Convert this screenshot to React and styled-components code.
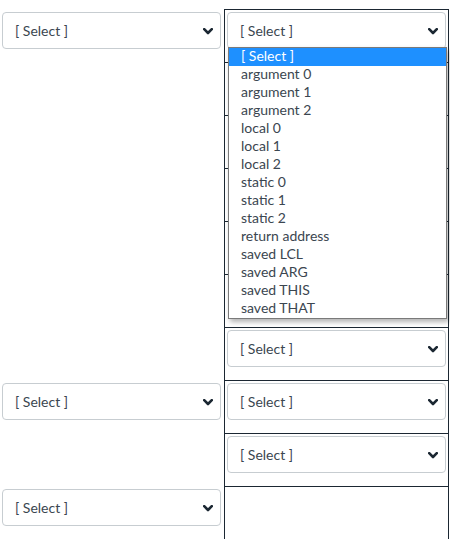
import React from 'react';
import styled, { createGlobalStyle } from 'styled-components';

const GlobalStyle = createGlobalStyle`
  body {
    margin: 0;
    background: #fff;
    font-family: Lato, "Open Sans", sans-serif;
    color: #2d3b45;
  }
`;

const Page = styled.div`
  padding-top: 9px;
  width: 450px;
`;

const Table = styled.div`
  display: flex;
  flex-direction: column;
`;

const Row = styled.div`
  display: flex;
  height: 53px;
  box-sizing: border-box;
`;

const LeftCell = styled.div`
  width: 224px;
  padding: 3px 0 0 2px;
  box-sizing: border-box;
`;

const RightCell = styled.div`
  position: relative;
  width: 225px;
  height: ${(p) => (p.$last ? '54px' : '53px')};
  padding: 2px;
  box-sizing: border-box;
  border: 1px solid #1b2732;
  border-bottom: ${(p) => (p.$last ? '1px solid #1b2732' : 'none')};
`;

const SelectBox = styled.div`
  position: relative;
  width: 219px;
  height: 37px;
  box-sizing: border-box;
  border: 1px solid #c7cdd1;
  border-radius: 4px;
  background: #fff;
  display: flex;
  align-items: center;
  padding: 0 12px 1px;
  font-size: 14px;
  color: #3b4650;
  cursor: pointer;
`;

const Chevron = styled.svg`
  position: absolute;
  right: 7px;
  top: 50%;
  margin-top: -3px;
`;

const List = styled.ul`
  position: absolute;
  z-index: 10;
  top: 37px;
  left: 3px;
  width: 219px;
  margin: 0;
  padding: 0;
  list-style: none;
  box-sizing: border-box;
  background: #fff;
  border: 1px solid #7a7a7a;
  box-shadow: 2px 3px 5px rgba(0, 0, 0, 0.3);
`;

const Option = styled.li`
  height: 18px;
  box-sizing: border-box;
  line-height: 16px;
  padding: 0 0 2px 12px;
  font-size: 14px;
  color: ${(p) => (p.$active ? '#fff' : '#3b4650')};
  background: ${(p) => (p.$active ? '#1e90ff' : 'transparent')};
  white-space: nowrap;
`;

const options = [
  '[ Select ]',
  'argument 0',
  'argument 1',
  'argument 2',
  'local 0',
  'local 1',
  'local 2',
  'static 0',
  'static 1',
  'static 2',
  'return address',
  'saved LCL',
  'saved ARG',
  'saved THIS',
  'saved THAT',
];

const rows = [
  { left: true, right: 'open' },
  { left: false, right: null },
  { left: false, right: null },
  { left: false, right: null },
  { left: false, right: null },
  { left: false, right: null },
  { left: false, right: 'select' },
  { left: true, right: 'select' },
  { left: false, right: 'select' },
  { left: true, right: null },
];

const Select = () => (
  <SelectBox>
    [ Select ]
    <Chevron width="10" height="7" viewBox="0 0 10 7">
      <polyline
        points="1.2,1.2 5,5 8.8,1.2"
        fill="none"
        stroke="#1b2732"
        strokeWidth="2.6"
        strokeLinecap="round"
        strokeLinejoin="round"
      />
    </Chevron>
  </SelectBox>
);

const App = () => (
  <Page>
    <GlobalStyle />
    <Table>
      {rows.map((r, i) => (
        <Row key={i}>
          <LeftCell>{r.left && <Select />}</LeftCell>
          <RightCell $last={i === rows.length - 1}>
            {r.right && <Select />}
            {r.right === 'open' && (
              <List>
                {options.map((o, j) => (
                  <Option key={o} $active={j === 0}>
                    {o}
                  </Option>
                ))}
              </List>
            )}
          </RightCell>
        </Row>
      ))}
    </Table>
  </Page>
);

export default App;
